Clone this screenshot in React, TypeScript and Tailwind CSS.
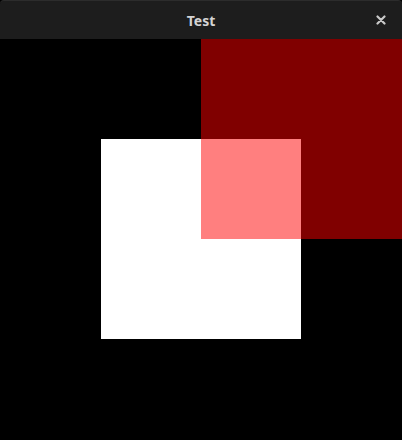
import React from 'react';

const TitleBar = ({ title }: { title: string }) => (
  <div className="relative flex h-[39px] items-center justify-center rounded-t-[4px] border-t border-[#2c2c2c] bg-[#1d1d1d]">
    <span className="text-[14px] font-bold text-[#d4d4d4]" style={{ fontFamily: '"Noto Sans", sans-serif' }}>
      {title}
    </span>
    <button className="absolute right-[13px] top-[11px] flex h-[16px] w-[16px] items-center justify-center text-[#c9c9c9]">
      <svg width="10" height="10" viewBox="0 0 10 10">
        <path d="M1.5 1.5 L8.5 8.5 M8.5 1.5 L1.5 8.5" stroke="currentColor" strokeWidth="2.2" strokeLinecap="round" />
      </svg>
    </button>
  </div>
);

export default function App() {
  return (
    <div className="flex h-[440px] w-[402px] flex-col bg-black">
      <TitleBar title="Test" />
      {/* drawing surface */}
      <div className="relative flex-1 overflow-hidden bg-black">
        <div className="absolute left-[101px] top-[100px] h-[200px] w-[200px] bg-white" />
        <div className="absolute left-[201px] top-0 h-[200px] w-[201px] bg-[rgba(255,0,0,0.5)]" />
      </div>
    </div>
  );
}
